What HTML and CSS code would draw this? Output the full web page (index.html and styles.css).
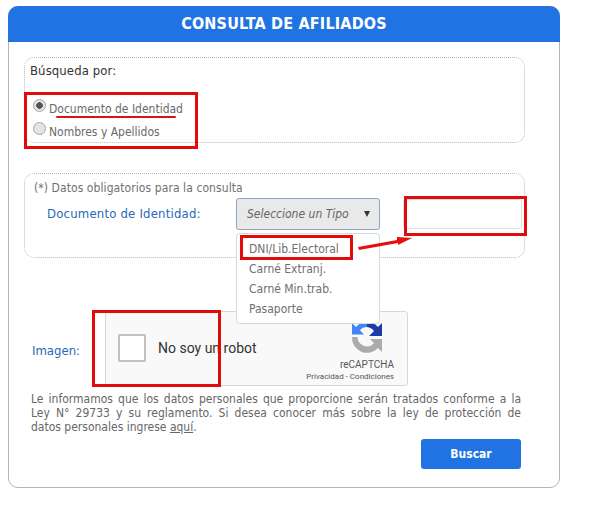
FILE: index.html
```html
<!DOCTYPE html>
<html lang="es">
<head>
<meta charset="utf-8">
<title>Consulta de afiliados</title>
<link rel="stylesheet" href="styles.css">
</head>
<body>
<main class="card">
  <h1 class="card-title">CONSULTA DE AFILIADOS</h1>
  <div class="card-body">
    <section class="box box-search">
      <div class="search-title">Búsqueda por:</div>
      <div class="radio-row"><span class="radio radio-on"></span><span>Documento de Identidad</span></div>
      <div class="radio-row"><span class="radio"></span><span>Nombres y Apellidos</span></div>
    </section>

    <section class="box box-required">
      <div class="note">(*) Datos obligatorios para la consulta</div>
      <div class="doc-row">
        <label class="doc-label">Documento de Identidad:</label>
        <div class="select"><span>Seleccione un Tipo</span><span class="caret"></span></div>
        <div class="doc-input"></div>
      </div>
    </section>

    <section class="captcha-row">
      <span class="captcha-label">Imagen:</span>
      <div class="captcha">
        <span class="captcha-check"></span>
        <span class="captcha-text">No soy un robot</span>
        <div class="captcha-brand">
          <svg class="captcha-logo" viewBox="0 0 32 32" width="32" height="32" aria-hidden="true">
            <path fill="#1c3aa9" d="M16 1a15 15 0 0 1 11 5l4-4v13H18l5-5a9.500 9.500 0 0 0-7-4z"/>
            <path fill="#4285f4" d="M16 1v5a9.500 9.500 0 0 0-7 3.200L13 13.500H1V2l4 4a15 15 0 0 1 11-5z"/>
            <path fill="#ababab" d="M1 16h5.500a9.500 9.500 0 0 0 16.500 6.200L19 18h12v13l-4-4A15 15 0 0 1 1 16z"/>
          </svg>
          <div class="captcha-name">reCAPTCHA</div>
          <div class="captcha-links">Privacidad - Condiciones</div>
        </div>
      </div>
    </section>

    <div class="legal">
      <div class="legal-line">Le informamos que los datos personales que proporcione serán tratados conforme a la</div>
      <div class="legal-line">Ley N° 29733 y su reglamento. Si desea conocer más sobre la ley de protección de</div>
      <div>datos personales ingrese <a class="legal-link" href="#">aquí</a>.</div>
    </div>

    <div class="actions"><button class="search-btn" type="button">Buscar</button></div>
  </div>

  <ul class="dropdown">
    <li>DNI/Lib.Electoral</li>
    <li>Carné Extranj.</li>
    <li>Carné Min.trab.</li>
    <li>Pasaporte</li>
  </ul>

  <div class="mark mark-radios"></div>
  <div class="mark-underline"></div>
  <div class="mark mark-input"></div>
  <div class="mark mark-dni"></div>
  <div class="mark mark-captcha"></div>
  <svg class="mark-arrow" viewBox="0 0 60 24" width="60" height="24" aria-hidden="true">
    <path fill="#e60f0f" d="M0 13L39 6 39 3 54 4 40 11 40 9 1 16z"/>
  </svg>
</main>
</body>
</html>
```
FILE: styles.css
```css
* { box-sizing: border-box; }
html, body { margin: 0; padding: 0; background: #fff; }
body {
  width: 599px;
  height: 505px;
  padding: 6px 0 0 8px;
  overflow: hidden;
  font-family: "DejaVu Sans Condensed", "DejaVu Sans", sans-serif;
  font-size: 12px;
  color: #6a6a6a;
}
.card {
  position: relative;
  width: 552px;
  height: 482px;
  border: 1px solid #b5b5b5;
  border-radius: 10px;
}
.card-title {
  margin: -1px -1px 0;
  height: 36px;
  background: #2173e3;
  border-radius: 10px 10px 0 0;
  color: #fff;
  font-size: 16px;
  font-weight: 700;
  line-height: 36px;
  text-align: center;
  letter-spacing: 0.2px;
}
.card-body { padding: 15px 33px 0 15px; }
.box {
  border: 1px dotted #b9b9b9;
  border-radius: 10px;
  width: 501px;
}
.box-search { height: 86px; padding: 5px 5px 0; }
.search-title { color: #333; font-size: 13px; line-height: 16px; letter-spacing: 0.1px; margin-bottom: 18px; }
.radio-row { display: flex; align-items: center; gap: 3px; height: 23px; padding-left: 3px; color: #6a6a6a; }
.radio {
  width: 13px; height: 13px; border-radius: 50%;
  border: 1px solid #a5a5a5; background: #e4e4e4;
  position: relative; top: -3px;
}
.radio-on { background: radial-gradient(circle, #555 0 3px, #e4e4e4 3.600px); }
.box-required { height: 85px; margin-top: 30px; padding: 7px 0 0 9px; }
.note { line-height: 14px; color: #6f6f6f; letter-spacing: 0.08px; }
.doc-row { display: flex; margin-top: 3px; align-items: flex-start; }
.doc-label { flex: none; width: 200px; padding: 8px 0 0 13px; color: #2a69b8; font-size: 13px; font-weight: 400; line-height: 16px; letter-spacing: 0.2px; }
.select {
  flex: none;
  width: 144px; height: 32px; margin-left: 2px;
  display: flex; align-items: center; justify-content: space-between;
  padding: 0 9px 0 10px;
  background: #e9e9e9;
  border: 1px solid #8fa5c4;
  border-radius: 3px;
  font-style: italic;
  color: #666;
}
.caret {
  width: 0; height: 0;
  border-left: 3.500px solid transparent;
  border-right: 3.500px solid transparent;
  border-top: 6px solid #333;
}
.doc-input {
  flex: none;
  width: 119px; height: 30px; margin-left: 23px; margin-top: 1px;
  border: 1px solid #ddd; border-radius: 3px; background: #fff;
}
.captcha-row { display: flex; align-items: center; margin-top: 53px; height: 75px; }
.captcha-label { width: 81px; padding-left: 8px; color: #2a69b8; font-size: 13px; margin-top: 4px; }
.captcha {
  width: 303px; height: 75px;
  position: relative;
  display: flex; align-items: center;
  background: #f9f9f9;
  border: 1px solid #d6d6d6;
  border-radius: 3px;
  font-family: Roboto, "Liberation Sans", sans-serif;
}
.captcha-check {
  width: 28px; height: 28px; margin-left: 12px; margin-top: -2px;
  background: #fff; border: 2px solid #c1c1c1; border-radius: 2px;
}
.captcha-text { margin-left: 12px; margin-top: -2px; color: #333; font-size: 14px; }
.captcha-brand { position: absolute; right: 13px; top: 9px; width: 90px; display: flex; flex-direction: column; align-items: flex-end; }
.captcha-logo { margin-right: 11px; }
.captcha-name { color: #555; font-size: 10px; margin-top: 6px; line-height: 12px; }
.captcha-links { color: #555; font-size: 8px; margin-top: 0; line-height: 11px; white-space: nowrap; }
.legal {
  margin: 6px 4px 0 7px;
  width: 490px;
  color: #666;
  font-size: 12px;
  line-height: 14px;
}
.legal-line { text-align: justify; text-align-last: justify; }
.legal-link { color: #666; text-decoration: underline; }
.actions { display: flex; justify-content: flex-end; margin-top: 5px; padding-right: 4px; width: 501px; }
.search-btn {
  width: 100px; height: 30px;
  border: 0; border-radius: 3px;
  background: #2173e3; color: #fff;
  font-family: inherit; font-size: 12px; font-weight: 700;
}
.dropdown {
  position: absolute; left: 227px; top: 226px;
  width: 144px; height: 91px;
  margin: 0; padding: 5px 0 0 12px;
  list-style: none;
  background: #fff;
  border: 1px solid #d5d9e0;
  border-radius: 4px;
  color: #6f6f6f;
}
.dropdown li { height: 20px; line-height: 20px; white-space: nowrap; }
.mark { position: absolute; border: 3px solid #e10b0b; }
.mark-radios { left: 15px; top: 85px; width: 174px; height: 57px; }
.mark-underline { position: absolute; left: 47px; top: 109px; width: 120px; height: 2px; background: #d81515; border-radius: 1px; }
.mark-input { left: 395px; top: 189px; width: 123px; height: 40px; }
.mark-dni { left: 231px; top: 228px; width: 113px; height: 25px; }
.mark-captcha { left: 83px; top: 303px; width: 129px; height: 77px; }
.mark-arrow { position: absolute; left: 349px; top: 227px; }
```
